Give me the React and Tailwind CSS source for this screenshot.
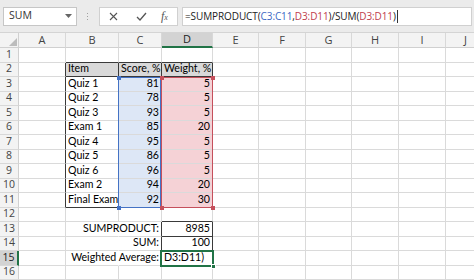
const COLS = ["A", "B", "C", "D", "E", "F", "G", "H", "I", "J"];
const WIDTHS = [47, 53, 43, 51, 46, 47, 46, 47, 47, 40];
const ROW_H = 14.5;

const items = [
  ["Quiz 1", 81, 5],
  ["Quiz 2", 78, 5],
  ["Quiz 3", 93, 5],
  ["Exam 1", 85, 20],
  ["Quiz 4", 95, 5],
  ["Quiz 5", 86, 5],
  ["Quiz 6", 96, 5],
  ["Exam 2", 94, 20],
  ["Final Exam", 92, 30],
];

const R_GRID = "border-r-[#dadada]";
const B_GRID = "border-b-[#dadada]";
const R_DARK = "border-r-[#3a3a3a]";
const B_DARK = "border-b-[#3a3a3a]";
const R_NONE = "border-r-transparent";

function cellInfo(row, col) {
  const c = COLS[col];
  let text = "";
  let align = "left";
  let cls = "";
  let right = R_GRID;
  let bottom = B_GRID;

  if (row === 1 && ["B", "C", "D"].includes(c)) bottom = B_DARK;
  if (row === 2) {
    if (c === "A") right = R_DARK;
    if (c === "B") { text = "Item"; cls = "bg-[#d9d9d9]"; right = R_DARK; bottom = B_DARK; }
    if (c === "C") { text = "Score, %"; cls = "bg-[#d9d9d9]"; right = R_DARK; bottom = B_DARK; }
    if (c === "D") { text = "Weight, %"; cls = "bg-[#d9d9d9]"; right = R_DARK; bottom = B_DARK; }
  }
  if (row >= 3 && row <= 11) {
    const it = items[row - 3];
    if (c === "A") right = R_DARK;
    if (c === "B") { text = it[0]; if (row === 11) bottom = B_DARK; }
    if (c === "C") { text = it[1]; align = "right"; cls = "bg-[#dde7f6]"; }
    if (c === "D") { text = it[2]; align = "right"; cls = "bg-[#f5d2d6]"; }
  }
  if (row === 12 && c === "D") bottom = B_DARK;
  if (row === 13) {
    if (c === "B") right = R_NONE;
    if (c === "C") { text = "SUMPRODUCT:"; align = "right"; right = R_DARK; }
    if (c === "D") { text = "8985"; align = "right"; right = R_DARK; bottom = B_DARK; }
  }
  if (row === 14) {
    if (c === "B") right = R_NONE;
    if (c === "C") { text = "SUM:"; align = "right"; right = R_DARK; }
    if (c === "D") { text = "100"; align = "right"; right = R_DARK; }
  }
  if (row === 15) {
    if (c === "B") right = R_NONE;
    if (c === "C") { text = "Weighted Average:"; align = "right"; }
    if (c === "D") { text = "D3:D11)"; }
  }
  return { text, align, cls, right, bottom };
}

function Cell({ row, col }) {
  const { text, align, cls, right, bottom } = cellInfo(row, col);
  return (
    <div
      className={`shrink-0 h-full border-r border-b ${right} ${bottom} ${cls} flex items-center whitespace-nowrap px-[2px] text-[10.6px] text-black ${align === "right" ? "justify-end" : "justify-start"}`}
      style={{ width: WIDTHS[col] }}
    >
      {text}
    </div>
  );
}

function Corner({ x, y, color }) {
  return (
    <div
      className={`absolute w-[4px] h-[4px] ${color}`}
      style={{ left: x - 1.5, top: y - 1.5 }}
    />
  );
}

function FormulaBar() {
  return (
    <div className="flex items-center h-[33px] bg-[#ebebeb] border-b border-[#d4d4d4] font-['Open_Sans',sans-serif]">
      <div className="ml-[3px] w-[74px] h-[19px] bg-white border border-[#c6c6c6] flex items-center pl-[5px] pr-[4px] text-[10.5px] text-[#333]">
        <span className="flex-1">SUM</span>
        <svg width="7" height="4" viewBox="0 0 7 4"><path d="M0 0h7L3.5 4z" fill="#666" /></svg>
      </div>
      <div className="ml-[10px] flex flex-col gap-[2px]">
        <span className="w-[1px] h-[1px] bg-[#a0a0a0]" />
        <span className="w-[1px] h-[1px] bg-[#a0a0a0]" />
        <span className="w-[1px] h-[1px] bg-[#a0a0a0]" />
      </div>
      <div className="ml-[11px] w-[79px] h-[19px] bg-white border border-[#d0d0d0] flex items-center">
        <svg className="ml-[9px]" width="9" height="9" viewBox="0 0 9 9">
          <path d="M1 1l7 7M8 1L1 8" stroke="#555" strokeWidth="1.1" />
        </svg>
        <svg className="ml-[18px]" width="11" height="9" viewBox="0 0 11 9">
          <path d="M1 5l3 3 6-7" stroke="#555" strokeWidth="1.3" fill="none" />
        </svg>
        <span className="ml-[14px] font-['Liberation_Serif',serif] italic text-[12px] text-[#555] leading-none">
          f<span className="text-[8px]">x</span>
        </span>
      </div>
      <div className="ml-[4px] mr-[2px] flex-1 h-[19px] bg-white border border-[#d0d0d0] flex items-center pl-[2px] text-[10px] tracking-[-0.1px] text-[#222]">
        <span>=SUMPRODUCT(</span>
        <span className="text-[#3b67c4]">C3:C11</span>
        <span>,</span>
        <span className="text-[#c0404d]">D3:D11</span>
        <span>)/SUM(</span>
        <span className="text-[#c0404d]">D3:D11</span>
        <span>)</span>
        <span className="ml-[1px] w-[1px] h-[13px] bg-[#333]" />
      </div>
    </div>
  );
}

function Grid() {
  const rows = Array.from({ length: 16 }, (_, i) => i + 1);
  return (
    <div className="relative font-['Lato',sans-serif]">
      <div className="flex h-[15px] bg-[#f3f3f3] text-[11px] text-[#444] font-['Open_Sans',sans-serif]">
        <div className="w-[19px] shrink-0 h-full border-r border-b border-[#d0d0d0] relative">
          <svg className="absolute left-[9px] top-[5px]" width="8" height="8" viewBox="0 0 8 8">
            <path d="M8 0v8H0z" fill="#bcbcbc" />
          </svg>
        </div>
        {COLS.map((c, i) => (
          <div
            key={c}
            className={`shrink-0 h-full flex items-center justify-center border-r border-r-[#d8d8d8] ${c === "D" ? "bg-[#d3d3d3] border-b-2 border-b-[#217346] text-[#222]" : "border-b border-b-[#d0d0d0]"}`}
            style={{ width: WIDTHS[i] }}
          >
            {c}
          </div>
        ))}
      </div>
      {rows.map((r) => (
        <div key={r} className="flex" style={{ height: ROW_H }}>
          <div
            className={`w-[19px] shrink-0 h-full flex items-center justify-center text-[10.5px] font-['Open_Sans',sans-serif] border-b border-b-[#d8d8d8] ${r === 15 ? "bg-[#d3d3d3] border-r-2 border-r-[#217346] text-[#222]" : "bg-[#f3f3f3] border-r border-r-[#d0d0d0] text-[#444]"}`}
          >
            {r}
          </div>
          {COLS.map((c, i) => (
            <Cell key={c} row={r} col={i} />
          ))}
        </div>
      ))}

      {/* range highlight for C3:C11 */}
      <div className="absolute border border-[#4472c4] left-[118px] top-[43.5px] w-[43px] h-[131px]" />
      {/* range highlight for D3:D11 */}
      <div className="absolute border border-[#c5505c] left-[161px] top-[43.5px] w-[52px] h-[131px]" />
      <Corner x={118.5} y={44} color="bg-[#4472c4]" />
      <Corner x={118.5} y={174} color="bg-[#4472c4]" />
      <Corner x={161.5} y={44} color="bg-[#c5505c]" />
      <Corner x={212.5} y={44} color="bg-[#c5505c]" />
      <Corner x={161.5} y={174} color="bg-[#c5505c]" />
      <Corner x={212.5} y={174} color="bg-[#c5505c]" />

      {/* active cell D15 */}
      <div className="absolute border-2 border-[#217346] left-[160px] top-[217px] w-[54px] h-[17px]" />
      <div className="absolute w-[5px] h-[5px] bg-[#217346] border border-white left-[211px] top-[231px]" />
    </div>
  );
}

export default function App() {
  return (
    <div className="w-[474px] h-[280px] overflow-hidden bg-white">
      <FormulaBar />
      <Grid />
    </div>
  );
}
